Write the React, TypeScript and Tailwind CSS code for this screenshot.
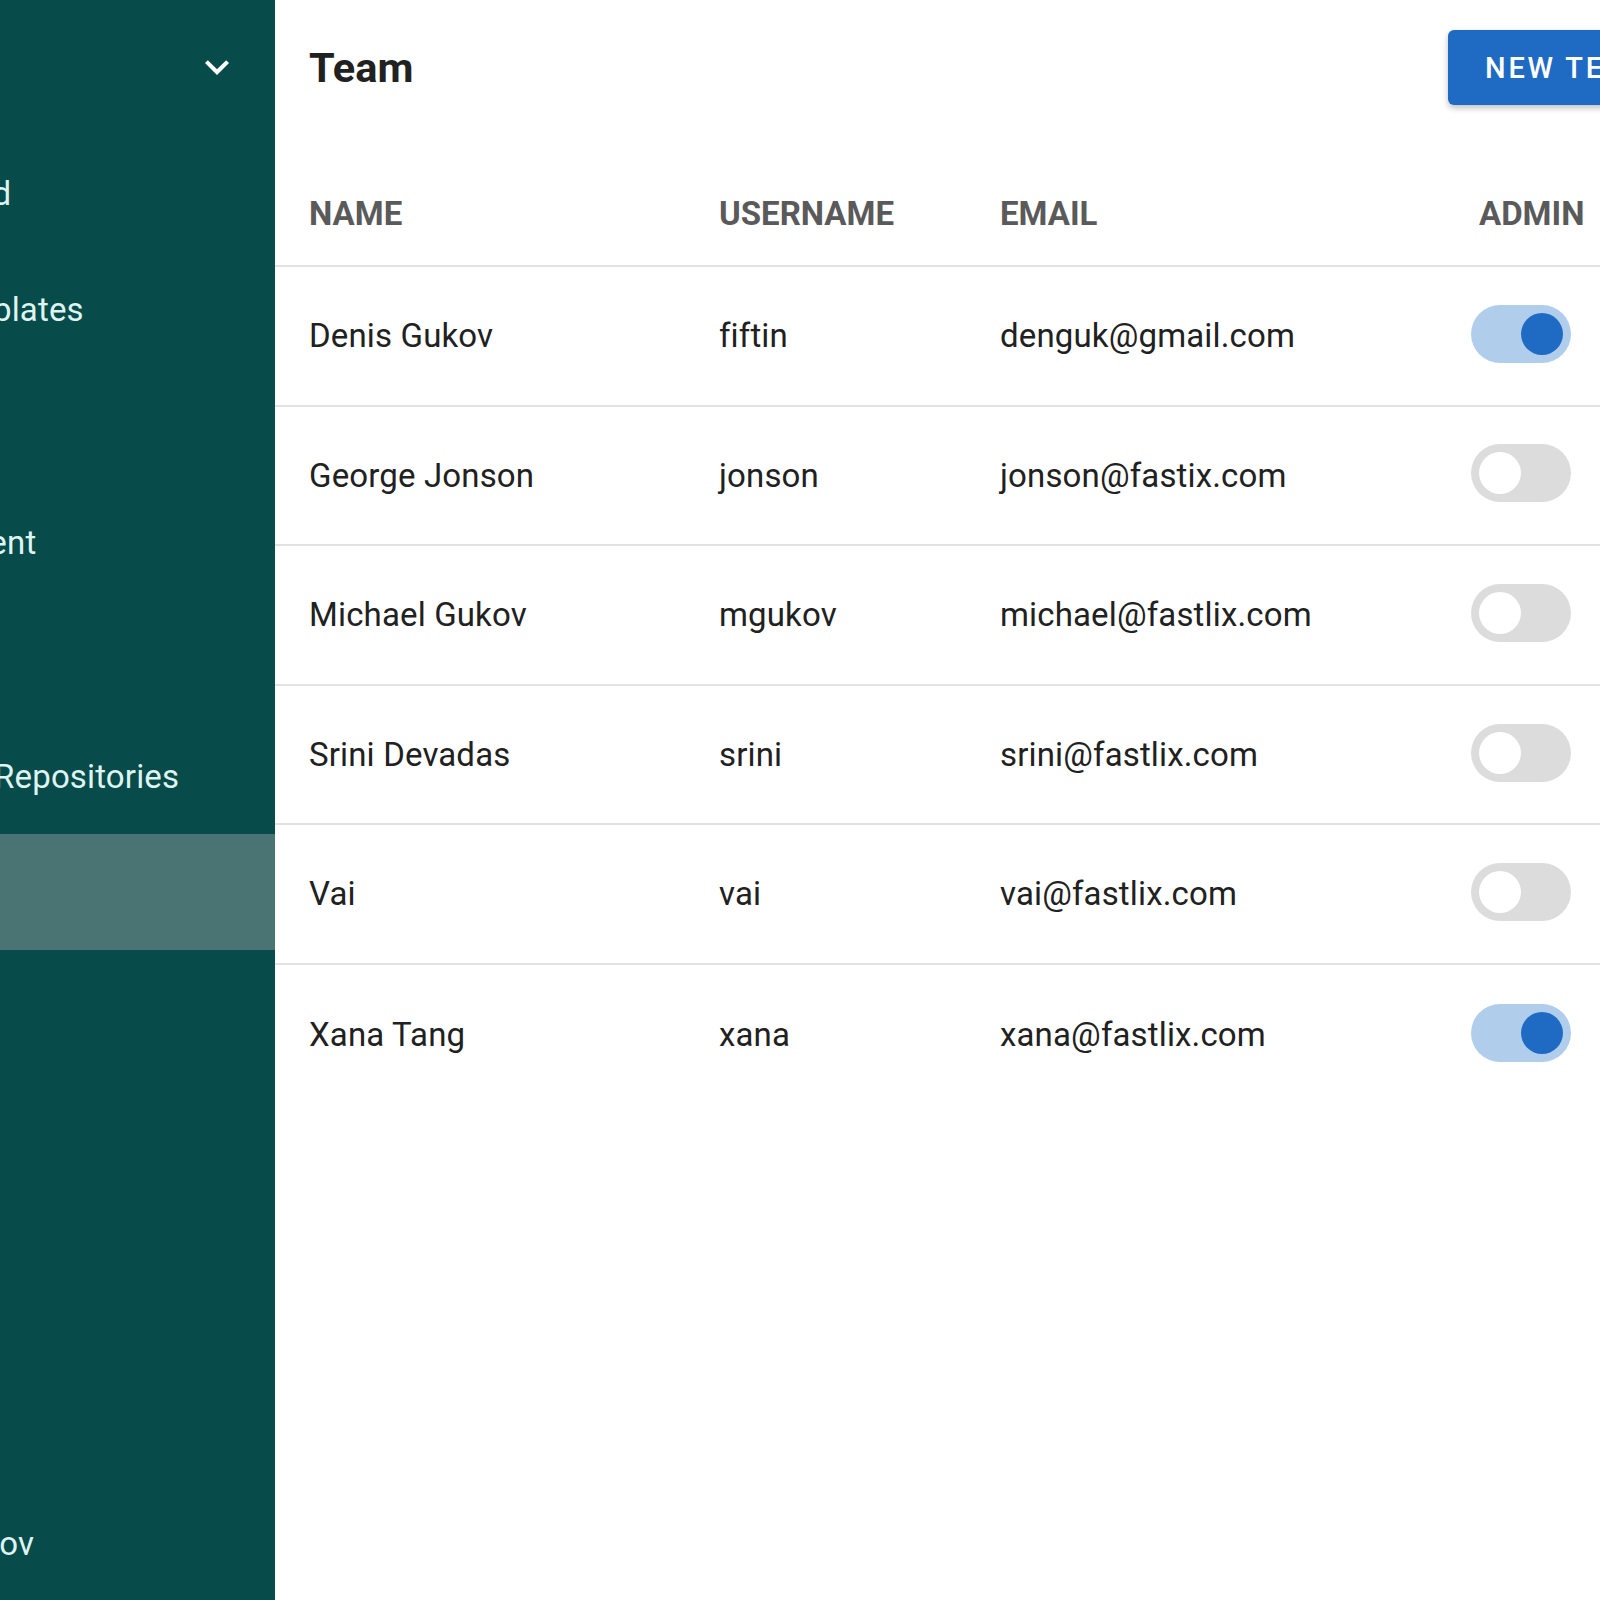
const navItems = [
  { label: "Build", offset: "-ml-[63px]" },
  { label: "Templates", offset: "-ml-[72px]" },
  { label: "", offset: "" },
  { label: "Agent", offset: "-ml-[51px]" },
  { label: "", offset: "" },
  { label: "Git Repositories", offset: "-ml-[56px]" },
  { label: "", offset: "" },
]

const members = [
  { name: "Denis Gukov", username: "fiftin", email: "denguk@gmail.com", admin: true },
  { name: "George Jonson", username: "jonson", email: "jonson@fastix.com", admin: false },
  { name: "Michael Gukov", username: "mgukov", email: "michael@fastlix.com", admin: false },
  { name: "Srini Devadas", username: "srini", email: "srini@fastlix.com", admin: false },
  { name: "Vai", username: "vai", email: "vai@fastlix.com", admin: false },
  { name: "Xana Tang", username: "xana", email: "xana@fastlix.com", admin: true },
]

function Toggle({ on }: { on: boolean }) {
  return (
    <div
      className={`-mt-[4px] flex h-[58px] w-[100px] items-center rounded-full px-[8px] ${
        on ? "justify-end bg-[#b1cdec]" : "justify-start bg-[#dcdcdc]"
      }`}
    >
      <div className={`h-[42px] w-[42px] rounded-full ${on ? "bg-[#1f6bc4]" : "bg-white"}`} />
    </div>
  )
}

export default function App() {
  return (
    <div className="flex h-[1600px] w-[1600px] overflow-hidden bg-white font-['Roboto',sans-serif] text-[33px] tracking-[0.15px] text-[#212121]">
      <aside className="flex w-[275px] shrink-0 flex-col overflow-hidden bg-[#074b4a] text-[#dff3f1]">
        <div className="flex h-[134px] shrink-0 items-center justify-end pr-[34px]">
          <svg className="h-[48px] w-[48px] text-white" viewBox="0 0 24 24" fill="currentColor">
            <path d="M16.59 8.59 12 13.17 7.41 8.59 6 10l6 6 6-6z" />
          </svg>
        </div>
        <nav className="flex flex-col">
          {navItems.map((item, i) => (
            <div
              key={i}
              className={`flex h-[116.6px] items-center whitespace-nowrap pt-[2px] ${
                i === navItems.length - 1 ? "bg-[#4a7373]" : ""
              }`}
            >
              <span className={item.offset}>{item.label}</span>
            </div>
          ))}
        </nav>
        <div className="mt-auto flex h-[112px] items-center whitespace-nowrap">
          <span className="-ml-[150px]">Denis Gukov</span>
        </div>
      </aside>

      <main className="flex min-w-0 flex-1 flex-col">
        <div className="flex h-[134px] shrink-0 items-start justify-between pl-[34px]">
          <h1 className="mt-[42px] text-[41.5px] font-bold leading-[52px] tracking-normal">Team</h1>
          <button className="mt-[30px] -mr-[239px] h-[75px] whitespace-nowrap rounded-[6px] bg-[#1f6ac3] px-[37px] pt-[2px] text-[29px] font-medium tracking-[2.8px] text-white shadow-[0_3px_6px_rgba(0,0,0,0.25)]">
            NEW TEAM MEMBER
          </button>
        </div>

        <div className="flex h-[133px] shrink-0 items-center border-b-2 border-[#e2e2e2] pl-[34px] pt-[29px] font-bold tracking-normal text-[#5a5a5a]">
          <div className="w-[410px]">NAME</div>
          <div className="w-[281px]">USERNAME</div>
          <div className="w-[479px]">EMAIL</div>
          <div className="whitespace-nowrap">ADMIN</div>
        </div>

        {members.map((m, i) => (
          <div
            key={m.username}
            className={`flex h-[139.6px] shrink-0 items-center pl-[34px] ${
              i < members.length - 1 ? "border-b-2 border-[#e2e2e2]" : ""
            }`}
          >
            <div className="w-[410px]">{m.name}</div>
            <div className="w-[281px]">{m.username}</div>
            <div className="w-[471px]">{m.email}</div>
            <Toggle on={m.admin} />
          </div>
        ))}
      </main>
    </div>
  )
}
